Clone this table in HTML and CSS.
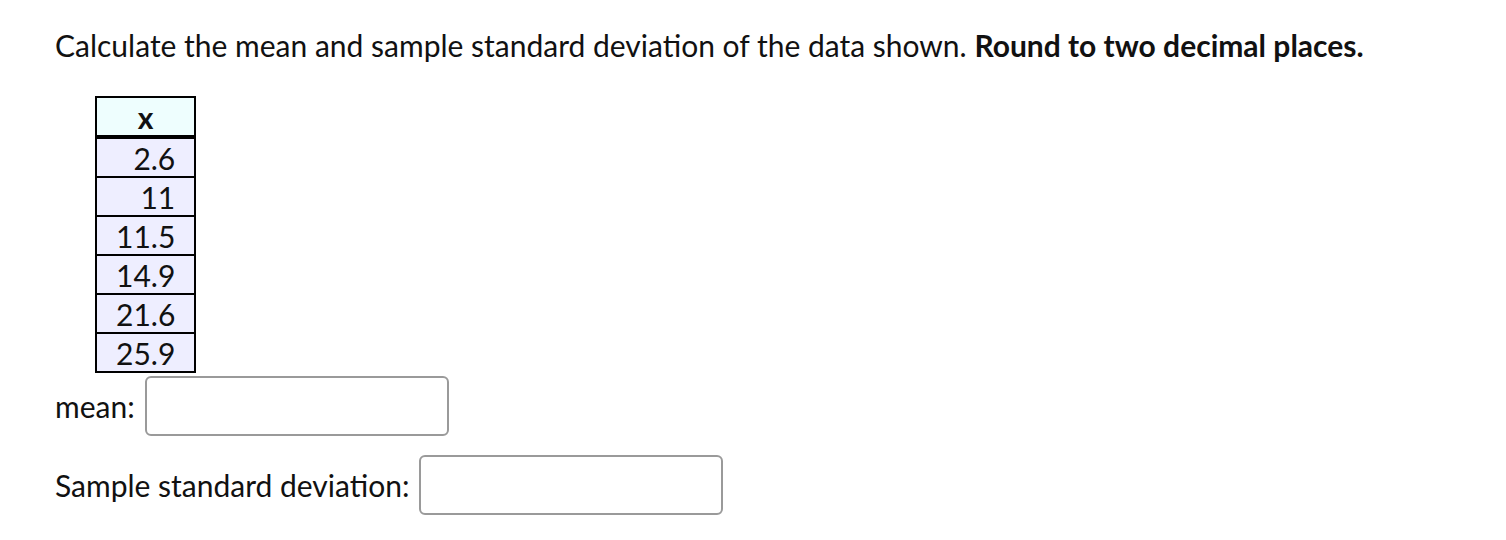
FILE: index.html
```html
<!DOCTYPE html>
<html>
<head>
<meta charset="utf-8">
<link rel="stylesheet" href="styles.css">
</head>
<body>
<div class="page">
  <p class="question">Calculate the mean and sample standard deviation of the data shown. <b>Round to two decimal places.</b></p>
  <table class="data">
    <thead><tr><th>x</th></tr></thead>
    <tbody>
      <tr><td>2.6</td></tr>
      <tr><td>11</td></tr>
      <tr><td>11.5</td></tr>
      <tr><td>14.9</td></tr>
      <tr><td>21.6</td></tr>
      <tr><td>25.9</td></tr>
    </tbody>
  </table>
  <div class="answer mean-row"><label for="mean">mean:</label><input id="mean" type="text"></div>
  <div class="answer sd-row"><label for="sd">Sample standard deviation:</label><input id="sd" type="text"></div>
</div>
</body>
</html>
```
FILE: styles.css
```css
html, body { margin: 0; padding: 0; background: #fff; }
body { font-family: Lato, "DejaVu Sans", sans-serif; color: #111; font-size: 30px; }
.page { padding: 29px 0 0 55px; }
.question { margin: 0; line-height: 32px; }
.question b { font-weight: 700; }
.data { border-collapse: collapse; margin: 35px 0 0 40px; border: 2px solid #000; }
.data th { background: #eefefe; font-weight: 700; text-align: center; height: 37px; padding: 0 19px; border-bottom: 4px solid #000; line-height: 1; }
.data td { background: #eeeeff; text-align: right; height: 37px; padding: 0 19px; border-top: 2px solid #000; line-height: 1; }
.data tbody tr:first-child td { border-top: none; }
.answer { display: flex; align-items: center; gap: 10px; }
.mean-row { margin-top: 3px; }
.sd-row { margin-top: 19px; }
.answer input { width: 300px; height: 56px; box-sizing: content-box; padding: 0; border: 2px solid #9a9a9a; border-radius: 6px; background: #fff; font: inherit; outline: none; }
```
